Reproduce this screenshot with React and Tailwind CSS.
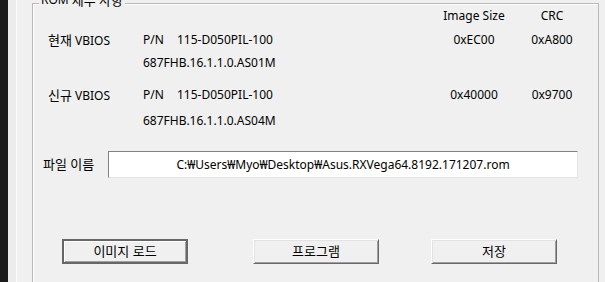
import React from 'react';

const rows = [
  { label: '현재', pn: '115-D050PIL-100', ver: '687FHB.16.1.1.0.AS01M', size: '0xEC00', crc: '0xA800' },
  { label: '신규', pn: '115-D050PIL-100', ver: '687FHB.16.1.1.0.AS04M', size: '0x40000', crc: '0x9700' },
];

const Btn = ({ children, isDefault, className }) => (
  <button
    className={
      'h-[25px] w-[126px] bg-[#f0f0f0] text-[13px] text-black flex items-center justify-center ' +
      (isDefault
        ? 'border-2 border-[#676767] shadow-[inset_1px_1px_0_#fff,inset_-1px_-1px_0_#a0a0a0] '
        : 'border border-t-[#fff] border-l-[#fff] border-r-[#696969] border-b-[#696969] shadow-[inset_1px_1px_0_#e3e3e3,inset_-1px_-1px_0_#a0a0a0] ') +
      (className || '')
    }
  >
    {children}
  </button>
);

export default function App() {
  return (
    <div className="w-[605px] h-[282px] bg-[#f0f0f0] flex overflow-hidden text-black text-[12px] leading-none font-['Noto_Sans','Noto_Sans_CJK_KR',sans-serif]">
      <div className="w-[8px] h-full bg-[#1b1b1b]" />
      <div className="w-[9px] h-full bg-[#ececec] border-r border-[#fafafa]" />
      <div className="flex-1 pl-[15px] pt-[3px]">
        <div className="relative w-[567px] h-[300px] border-l border-t border-r border-[#b8b8b8] shadow-[inset_1px_1px_0_#fff]">
          <div className="absolute left-[6px] top-[-12px] px-[2px] bg-[#f0f0f0] h-[16px] flex items-center">
            ROM <span className="text-[13px] ml-[3px]">세부 사항</span>
          </div>

          <div className="pl-[15px] pt-[2px]">
            <div className="grid grid-cols-[95px_34px_257px_80px_76px] h-[20px] items-center">
              <div />
              <div />
              <div />
              <div className="text-center">Image Size</div>
              <div className="text-center">CRC</div>
            </div>

            {rows.map((r, i) => (
              <div key={r.label} className={i === 0 ? 'mt-[4px]' : 'mt-[12px]'}>
                <div className="grid grid-cols-[95px_34px_257px_80px_76px] h-[20px] items-center">
                  <div>
                    <span className="text-[13px]">{r.label}</span> VBIOS
                  </div>
                  <div>P/N</div>
                  <div>{r.pn}</div>
                  <div className="text-center">{r.size}</div>
                  <div className="text-center">{r.crc}</div>
                </div>
                <div className={'grid grid-cols-[95px_1fr] h-[20px] items-center ' + (i === 0 ? 'mt-[3px]' : 'mt-[6px]')}>
                  <div />
                  <div>{r.ver}</div>
                </div>
              </div>
            ))}

            <div className="flex items-center mt-[20px] ml-[-5px]">
              <div className="w-[65px] text-[13px]">파일 이름</div>
              <div className="w-[470px] h-[27px] bg-white border border-t-[#828282] border-l-[#828282] border-r-[#e3e3e3] border-b-[#e3e3e3] flex items-center justify-center">
                C:₩Users₩Myo₩Desktop₩Asus.RXVega64.8192.171207.rom
              </div>
            </div>

            <div className="flex mt-[61px] ml-[14px]">
              <Btn isDefault>이미지 로드</Btn>
              <Btn className="ml-[65px]">프로그램</Btn>
              <Btn className="ml-[52px]">저장</Btn>
            </div>
          </div>
        </div>
      </div>
    </div>
  );
}
